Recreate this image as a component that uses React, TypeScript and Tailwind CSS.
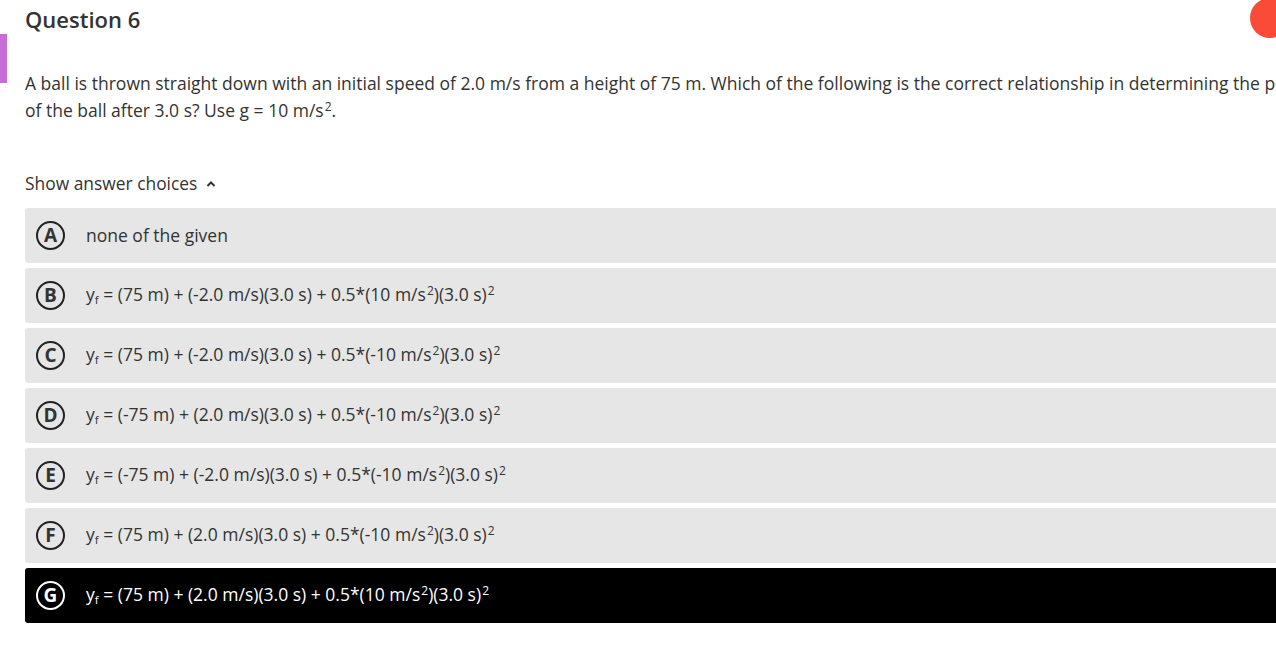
import React from "react";

type Choice = { letter: string; content: React.ReactNode; selected?: boolean };

const font = { fontFamily: '"Open Sans", "Liberation Sans", sans-serif' };

function Yf() {
  return (
    <>
      y<span className="text-[11.5px] relative top-[3px]">f</span>
    </>
  );
}

function Sq() {
  return <span className="text-[12px] relative -top-[6px] ml-[1px]">2</span>;
}

function Eq({ a, b, c }: { a: string; b: string; c: string }) {
  return (
    <span>
      <Yf /> = ({a}) + ({b})(3.0 s) + 0.5*({c} m/s<Sq />)(3.0 s)<Sq />
    </span>
  );
}

const CHOICES: Choice[] = [
  { letter: "A", content: "none of the given" },
  { letter: "B", content: <Eq a="75 m" b="-2.0 m/s" c="10" /> },
  { letter: "C", content: <Eq a="75 m" b="-2.0 m/s" c="-10" /> },
  { letter: "D", content: <Eq a="-75 m" b="2.0 m/s" c="-10" /> },
  { letter: "E", content: <Eq a="-75 m" b="-2.0 m/s" c="-10" /> },
  { letter: "F", content: <Eq a="75 m" b="2.0 m/s" c="-10" /> },
  { letter: "G", content: <Eq a="75 m" b="2.0 m/s" c="10" />, selected: true },
];

export default function App() {
  return (
    <div className="w-full h-[649px] overflow-hidden bg-white text-[#333333]" style={font}>
      <div className="relative w-[1360px]">
        <div className="absolute left-[1250px] -top-[2px] w-[40px] h-[40px] rounded-full bg-[#fa4a38]" />
        <div className="absolute left-0 top-[34px] w-[7px] h-[49px] bg-[#c86dd7]" />

        <div className="pl-[25px]">
          <h2 className="pt-[4px] text-[22px] leading-[30px] font-semibold text-[#333333]">
            Question 6
          </h2>

          <p className="mt-[36px] w-[1306px] text-[17.5px] leading-[27px]">
            A ball is thrown straight down with an initial speed of 2.0 m/s from a height of 75 m. Which of the
            following is the correct relationship in determining the position of the ball after 3.0 s? Use g = 10
            m/s<Sq />.
          </p>

          <button
            type="button"
            className="mt-[44px] flex items-center gap-[9px] text-[17.4px] leading-[26px] text-[#333333]"
          >
            Show answer choices
            <svg width="10" height="8" viewBox="0 0 10 8" className="mt-[2px]">
              <path d="M1.5 6 L5 2.5 L8.5 6" fill="none" stroke="#333" strokeWidth="2" />
            </svg>
          </button>

          <div className="mt-[12px] flex flex-col gap-[5px]">
            {CHOICES.map((c) => (
              <div
                key={c.letter}
                className={`h-[55px] flex items-center pl-[11px] gap-[21px] rounded-[3px] ${
                  c.selected ? "bg-black text-white" : "bg-[#e6e6e6] text-[#333333]"
                }`}
              >
                <span
                  className={`shrink-0 w-[29px] h-[29px] rounded-full border-2 flex items-center justify-center text-[19px] leading-none font-bold ${
                    c.selected ? "border-white" : "border-[#222222]"
                  }`}
                >
                  {c.letter}
                </span>
                <span className="text-[17.5px] leading-[26px] whitespace-nowrap -mt-[1px]">{c.content}</span>
              </div>
            ))}
          </div>
        </div>
      </div>
    </div>
  );
}
